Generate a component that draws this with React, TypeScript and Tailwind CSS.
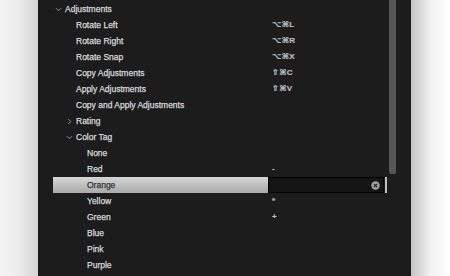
import React from 'react'

type Row = {
  label: string
  level: 0 | 1 | 2
  chevron?: 'down' | 'right'
  shortcut?: string
  selected?: boolean
}

const rows: Row[] = [
  { label: 'Adjustments', level: 0, chevron: 'down' },
  { label: 'Rotate Left', level: 1, shortcut: '⌥⌘L' },
  { label: 'Rotate Right', level: 1, shortcut: '⌥⌘R' },
  { label: 'Rotate Snap', level: 1, shortcut: '⌥⌘X' },
  { label: 'Copy Adjustments', level: 1, shortcut: '⇧⌘C' },
  { label: 'Apply Adjustments', level: 1, shortcut: '⇧⌘V' },
  { label: 'Copy and Apply Adjustments', level: 1 },
  { label: 'Rating', level: 1, chevron: 'right' },
  { label: 'Color Tag', level: 1, chevron: 'down' },
  { label: 'None', level: 2 },
  { label: 'Red', level: 2, shortcut: '-' },
  { label: 'Orange', level: 2, selected: true },
  { label: 'Yellow', level: 2, shortcut: '*' },
  { label: 'Green', level: 2, shortcut: '+' },
  { label: 'Blue', level: 2 },
  { label: 'Pink', level: 2 },
  { label: 'Purple', level: 2 },
]

const indent = ['pl-[27px]', 'pl-[38px]', 'pl-[49px]']

function Chevron({ dir }: { dir: 'down' | 'right' }) {
  return (
    <svg width="7" height="7" viewBox="0 0 7 7" className="mr-[3px] shrink-0">
      {dir === 'down' ? (
        <path d="M1 2.2 L3.5 4.7 L6 2.2" fill="none" stroke="#9a9a9a" strokeWidth="1" />
      ) : (
        <path d="M2.3 1 L4.8 3.5 L2.3 6" fill="none" stroke="#9a9a9a" strokeWidth="1" />
      )}
    </svg>
  )
}

function ClearIcon() {
  return (
    <svg width="9" height="9" viewBox="0 0 9 9">
      <circle cx="4.5" cy="4.5" r="4.2" fill="#a4a4a4" />
      <path d="M2.8 2.8 L6.2 6.2 M6.2 2.8 L2.8 6.2" stroke="#1a1a1a" strokeWidth="1.1" />
    </svg>
  )
}

function MenuRow({ row }: { row: Row }) {
  if (row.selected) {
    return (
      <div className="flex h-4 items-stretch">
        <div className="ml-[15px] flex w-[215px] items-center bg-gradient-to-b from-[#d6d6d6] to-[#a9a9a9] pl-[34px] text-[#333336] [-webkit-text-stroke:0.25px_#333336]">
          {row.label}
        </div>
        <div className="flex w-[116px] items-center justify-end border border-black bg-[#151515] pr-[3px]">
          <ClearIcon />
        </div>
        <div className="ml-px w-[2px] bg-[#bdbdbd]" />
      </div>
    )
  }
  const pad = row.chevron ? (row.level === 0 ? 'pl-[17px]' : 'pl-[28px]') : indent[row.level]
  return (
    <div className="flex h-4 items-center">
      <div className={`flex w-[234px] items-center ${pad}`}>
        {row.chevron && <Chevron dir={row.chevron} />}
        <span>{row.label}</span>
      </div>
      {row.shortcut && (
        <span className="text-[8px] font-bold tracking-[0.3px] text-[#bdbdc2] [-webkit-text-stroke:0.2px_#bdbdc2]">
          {row.shortcut}
        </span>
      )}
    </div>
  )
}

export default function App() {
  return (
    <div
      className="flex h-[276px] w-[450px] overflow-hidden bg-white"
      style={{ fontFamily: '"Liberation Sans", "DejaVu Sans", sans-serif' }}
    >
      <div className="w-[38px] shrink-0 bg-gradient-to-r from-[#f4f4f4] via-[#ececec] to-[#d4d4d4]" />
      <div className="flex w-[373px] shrink-0 bg-[#1c1c1c]">
        <div className="w-[351px] pt-px text-[8.5px] text-[#dadade] [-webkit-text-stroke:0.25px_#dadade]">
          {rows.map(r => (
            <MenuRow key={r.label} row={r} />
          ))}
        </div>
        <div className="w-[7px]">
          <div className="h-[174px] rounded-b-[2px] bg-[#575757]" />
        </div>
      </div>
      <div className="flex-1 bg-gradient-to-r from-[#c4c4c4] via-[#f2f2f2] to-white" />
    </div>
  )
}
